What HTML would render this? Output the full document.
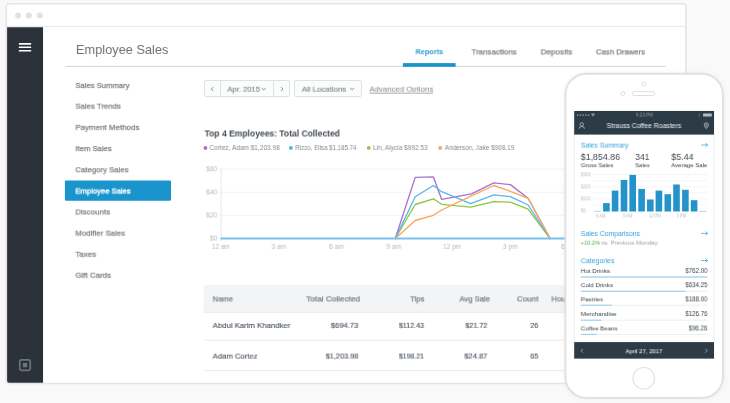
<!DOCTYPE html>
<html lang="en">
<head>
<meta charset="utf-8">
<title>Employee Sales</title>
<style>
*{box-sizing:border-box;}
html,body{margin:0;padding:0;}
body{width:730px;height:403px;overflow:hidden;position:relative;background:#f9f9f9;font-family:"Liberation Sans",sans-serif;}
.abs,.t,.layer,.layer div,.layer svg{position:absolute;}
.t{white-space:pre;transform-origin:0 0;}
.layer{left:0;top:0;width:730px;height:403px;}
.btn{top:80px;height:17px;border:1px solid #dfe2e4;background:#fbfcfc;border-radius:2px;}

</style>
</head>
<body>
<div class="layer" id="L1">
  <svg width="730" height="403" viewBox="0 0 730 403" style="left:0;top:0">
    <rect x="6.3" y="3.8" width="679.6" height="379.7" rx="3" ry="3" fill="#fff" stroke="#e5e5e5" stroke-width="1.6"/>
    <rect x="7.1" y="25.9" width="678" height="1" fill="#e6e6e6"/>
    <circle cx="18.1" cy="15.6" r="3" fill="#e1e1e1"/>
    <circle cx="28.9" cy="15.6" r="3" fill="#e1e1e1"/>
    <circle cx="39.7" cy="15.6" r="3" fill="#e1e1e1"/>
    <path d="M7.1 27.3 H43.05 V382.7 H9 Q7.1 382.7 7.1 380.8 Z" fill="#2b323a"/>
  </svg>
  <svg width="44" height="403" viewBox="0 0 44 403" style="left:0;top:0">
    <g fill="#fff">
      <rect x="18.8" y="43.05" width="12.4" height="1.6" rx="0.4"/>
      <rect x="18.8" y="46.5" width="12.4" height="1.6" rx="0.4"/>
      <rect x="18.8" y="50.0" width="12.4" height="1.6" rx="0.4"/>
    </g>
    <rect x="19.75" y="359.85" width="10.5" height="10.5" rx="1.6" fill="none" stroke="#6b737b" stroke-width="1.7"/>
    <rect x="22.9" y="363.0" width="4.2" height="4.2" rx="0.5" fill="#6b737b"/>
  </svg>
  <div class="btn" style="left:204px;width:86px"></div>
  <div class="abs" style="left:220px;top:80px;width:1px;height:17px;background:#dfe2e4"></div>
  <div class="abs" style="left:273px;top:80px;width:1px;height:17px;background:#dfe2e4"></div>
  <div class="btn" style="left:294px;width:68px"></div>
  <svg width="730" height="403" viewBox="0 0 730 403" style="left:0;top:0">
    <rect x="65.4" y="65.9" width="600.3" height="1" fill="#d0d6d6"/>
    <rect x="402.9" y="63.1" width="52.7" height="3.7" fill="#1a94cc"/>
    <rect x="64.9" y="180.4" width="106.1" height="20.4" rx="1.2" fill="#1a94cc"/>
    <rect x="203.6" y="284.9" width="482" height="27.4" fill="#f2f4f5"/>
    <rect x="203.6" y="311.8" width="482" height="1" fill="#e6e9eb"/>
    <rect x="203.6" y="339.7" width="482" height="1" fill="#e9ebed"/>
    <rect x="203.6" y="370.1" width="482" height="1" fill="#e9ebed"/>
    <!-- control chevrons -->
    <g fill="none" stroke="#8b9095" stroke-width="1" stroke-linecap="round" stroke-linejoin="round">
      <path d="M212.9 87.4 L211.3 89.1 L212.9 90.8"/>
      <path d="M281.3 87.4 L282.9 89.1 L281.3 90.8"/>
      <path d="M262.1 88.3 L263.8 89.9 L265.5 88.3"/>
      <path d="M350.5 88.3 L352.2 89.9 L353.9 88.3"/>
    </g>
    <!-- legend dots -->
    <circle cx="205.4" cy="147.9" r="1.9" fill="#a86bd4"/>
    <circle cx="290.9" cy="147.9" r="1.9" fill="#4bb3ea"/>
    <circle cx="368.8" cy="147.9" r="1.9" fill="#8dc63f"/>
    <circle cx="440.2" cy="147.9" r="1.9" fill="#f7a452"/>
    <!-- grid -->
    <g stroke="#eff0f1" stroke-width="0.8">
      <path d="M219 169.1H686 M219 192.3H686 M219 215.3H686"/>
    </g>
    <path d="M221.1 168V239.5" stroke="#e2e4e6" stroke-width="0.9"/>
    <g stroke="#e2e4e6" stroke-width="0.7">
      <path d="M221.1 238.4V241 M240.4 238.4V240.2 M259.8 238.4V240.2 M279.1 238.4V241 M298.4 238.4V240.2 M317.8 238.4V240.2 M337.1 238.4V241 M356.4 238.4V240.2 M375.8 238.4V240.2 M395.1 238.4V241 M414.4 238.4V240.2 M433.8 238.4V240.2 M453.1 238.4V241 M472.4 238.4V240.2 M491.8 238.4V240.2 M511.1 238.4V241 M530.4 238.4V240.2 M549.8 238.4V240.2"/>
    </g>
    <g fill="none" stroke-width="1.35" stroke-linejoin="round" stroke-linecap="round">
      <path stroke="#8fc545" d="M395.3 238.5L415.2 204.5L433.4 198.8L441.7 204.3L470.7 207.2L493.9 201.6L510.4 202.2L528.1 209.1L550.1 238.5"/>
      <path stroke="#a971d6" d="M395.3 238.5L415.2 177.4L433.4 176.9L441.7 199.4L471.4 193.9L493.9 182.8L510.4 184.6L528.1 198.3L550.1 238.5"/>
      <path stroke="#55b8ec" d="M395.3 238.5L415.2 196.7L433.4 185.5L441.7 191.7L470.7 203.7L493.9 194.8L510.4 196.7L528.1 205L550.1 238.5"/>
      <path stroke="#f7a75a" d="M395.3 238.5L415.2 220.5L433.4 215.3L441.7 210L471.4 195.9L493.9 185.5L510.4 191.3L528.1 198.3L550.1 238.5"/>
      <path stroke="#78c2ec" stroke-width="1.8" d="M221.1 238.5H686"/>
    </g>
  </svg>
<span class="t" style="left:75px;top:41px;font-size:12.8px;line-height:17px;color:#6a7076;transform:perspective(100000px) translate(0.90px,0.02px) rotateX(0.01deg) scale(1.0002,1);">Employee Sales</span>
<span class="t" style="left:75px;top:79px;font-size:8px;line-height:12px;color:#7b8085;transform:perspective(100000px) translate(0.40px,0.94px) rotateX(0.01deg) scale(0.9581,1);-webkit-text-stroke:0.25px;">Sales Summary</span>
<span class="t" style="left:75px;top:100px;font-size:8px;line-height:12px;color:#7b8085;transform:perspective(100000px) translate(0.40px,0.64px) rotateX(0.01deg) scale(0.9721,1);-webkit-text-stroke:0.25px;">Sales Trends</span>
<span class="t" style="left:75px;top:121px;font-size:8px;line-height:12px;color:#7b8085;transform:perspective(100000px) translate(0.40px,0.84px) rotateX(0.01deg) scale(0.9940,1);-webkit-text-stroke:0.25px;">Payment Methods</span>
<span class="t" style="left:75px;top:143px;font-size:8px;line-height:12px;color:#7b8085;transform:perspective(100000px) translate(0.40px,0.04px) rotateX(0.01deg) scale(0.9630,1);-webkit-text-stroke:0.25px;">Item Sales</span>
<span class="t" style="left:75px;top:164px;font-size:8px;line-height:12px;color:#7b8085;transform:perspective(100000px) translate(0.40px,0.24px) rotateX(0.01deg) scale(0.9707,1);-webkit-text-stroke:0.25px;">Category Sales</span>
<span class="t" style="left:75px;top:185px;font-size:8px;line-height:12px;color:#ffffff;transform:perspective(100000px) translate(0.40px,0.54px) rotateX(0.01deg) scale(0.9565,1);-webkit-text-stroke:0.35px;">Employee Sales</span>
<span class="t" style="left:75px;top:206px;font-size:8px;line-height:12px;color:#7b8085;transform:perspective(100000px) translate(0.40px,0.44px) rotateX(0.01deg) scale(0.9879,1);-webkit-text-stroke:0.25px;">Discounts</span>
<span class="t" style="left:75px;top:227px;font-size:8px;line-height:12px;color:#7b8085;transform:perspective(100000px) translate(0.40px,0.64px) rotateX(0.01deg) scale(0.9785,1);-webkit-text-stroke:0.25px;">Modifier Sales</span>
<span class="t" style="left:75px;top:248px;font-size:8px;line-height:12px;color:#7b8085;transform:perspective(100000px) translate(0.40px,0.74px) rotateX(0.01deg) scale(0.9901,1);-webkit-text-stroke:0.25px;">Taxes</span>
<span class="t" style="left:75px;top:269px;font-size:8px;line-height:12px;color:#7b8085;transform:perspective(100000px) translate(0.40px,0.74px) rotateX(0.01deg) scale(0.9912,1);-webkit-text-stroke:0.25px;">Gift Cards</span>
<span class="t" style="left:415px;top:46px;font-size:7.6px;line-height:11px;color:#2d9bd3;font-weight:700;transform:perspective(100000px) translate(0.50px,0.21px) rotateX(0.01deg) scale(0.9616,1);">Reports</span>
<span class="t" style="left:471px;top:46px;font-size:8.1px;line-height:12px;color:#7b8085;transform:perspective(100000px) translate(0.50px,0.37px) rotateX(0.01deg) scale(0.9794,1);-webkit-text-stroke:0.25px;">Transactions</span>
<span class="t" style="left:540px;top:46px;font-size:8.1px;line-height:12px;color:#7b8085;transform:perspective(100000px) translate(0.70px,0.37px) rotateX(0.01deg) scale(1.0000,1);-webkit-text-stroke:0.25px;">Deposits</span>
<span class="t" style="left:596px;top:46px;font-size:8.1px;line-height:12px;color:#7b8085;transform:perspective(100000px) translate(0.10px,0.37px) rotateX(0.01deg) scale(0.9536,1);-webkit-text-stroke:0.25px;">Cash Drawers</span>
<span class="t" style="left:227px;top:83px;font-size:8px;line-height:12px;color:#82878b;transform:perspective(100000px) translate(0.40px,0.74px) rotateX(0.01deg) scale(0.9518,1);-webkit-text-stroke:0.14px;">Apr. 2015</span>
<span class="t" style="left:301px;top:83px;font-size:8px;line-height:12px;color:#82878b;transform:perspective(100000px) translate(0.80px,0.74px) rotateX(0.01deg) scale(0.9811,1);-webkit-text-stroke:0.14px;">All Locations</span>
<span class="t" style="left:369px;top:83px;font-size:8px;line-height:12px;color:#808589;transform:perspective(100000px) translate(0.50px,0.64px) rotateX(0.01deg) scale(0.9744,1);text-decoration:underline;text-decoration-thickness:0.6px;text-underline-offset:1px;text-decoration-color:#a4a8ab;">Advanced Options</span>
<span class="t" style="left:204px;top:127px;font-size:8.8px;line-height:13px;color:#3f4850;font-weight:700;transform:perspective(100000px) translate(0.60px,0.50px) rotateX(0.01deg) scale(0.9700,1);">Top 4 Employees: Total Collected</span>
<span class="t" style="left:209px;top:143px;font-size:6.7px;line-height:10px;color:#85898e;transform:perspective(100000px) translate(0.60px,0.01px) rotateX(0.01deg) scale(0.9719,1);">Cortez, Adam $1,203.98</span>
<span class="t" style="left:295px;top:143px;font-size:6.7px;line-height:10px;color:#85898e;transform:perspective(100000px) translate(0.30px,0.01px) rotateX(0.01deg) scale(0.9212,1);">Rizzo, Elisa $1,185.74</span>
<span class="t" style="left:373px;top:143px;font-size:6.7px;line-height:10px;color:#85898e;transform:perspective(100000px) translate(0.00px,0.01px) rotateX(0.01deg) scale(0.9723,1);">Lin, Alycia $992.53</span>
<span class="t" style="left:444px;top:143px;font-size:6.7px;line-height:10px;color:#85898e;transform:perspective(100000px) translate(0.80px,0.01px) rotateX(0.01deg) scale(0.9598,1);">Anderson, Jake $908.19</span>
<span class="t" style="left:206px;top:164px;font-size:6.6px;line-height:10px;color:#b3b7ba;transform:perspective(100000px) translate(0.28px,0.28px) rotateX(0.01deg) scale(1.0000,1);">$60</span>
<span class="t" style="left:206px;top:187px;font-size:6.6px;line-height:10px;color:#b3b7ba;transform:perspective(100000px) translate(0.28px,0.48px) rotateX(0.01deg) scale(1.0000,1);">$40</span>
<span class="t" style="left:206px;top:210px;font-size:6.6px;line-height:10px;color:#b3b7ba;transform:perspective(100000px) translate(0.28px,0.48px) rotateX(0.01deg) scale(1.0000,1);">$20</span>
<span class="t" style="left:209px;top:233px;font-size:6.6px;line-height:10px;color:#b3b7ba;transform:perspective(100000px) translate(0.96px,0.58px) rotateX(0.01deg) scale(1.0000,1);">$0</span>
<span class="t" style="left:212px;top:241px;font-size:6.6px;line-height:10px;color:#b3b7ba;transform:perspective(100000px) translate(0.00px,0.88px) rotateX(0.01deg) scale(0.9603,1);">12 am</span>
<span class="t" style="left:271px;top:241px;font-size:6.6px;line-height:10px;color:#b3b7ba;transform:perspective(100000px) translate(0.50px,0.88px) rotateX(0.01deg) scale(1.0087,1);">3 am</span>
<span class="t" style="left:329px;top:241px;font-size:6.6px;line-height:10px;color:#b3b7ba;transform:perspective(100000px) translate(0.10px,0.88px) rotateX(0.01deg) scale(1.0087,1);">6 am</span>
<span class="t" style="left:386px;top:241px;font-size:6.6px;line-height:10px;color:#b3b7ba;transform:perspective(100000px) translate(0.40px,0.88px) rotateX(0.01deg) scale(1.0087,1);">9 am</span>
<span class="t" style="left:443px;top:241px;font-size:6.6px;line-height:10px;color:#b3b7ba;transform:perspective(100000px) translate(0.30px,0.88px) rotateX(0.01deg) scale(0.9603,1);">12 pm</span>
<span class="t" style="left:502px;top:241px;font-size:6.6px;line-height:10px;color:#b3b7ba;transform:perspective(100000px) translate(0.90px,0.88px) rotateX(0.01deg) scale(1.0087,1);">3 pm</span>
<span class="t" style="left:561px;top:241px;font-size:6.6px;line-height:10px;color:#b3b7ba;transform:perspective(100000px) translate(0.10px,0.88px) rotateX(0.01deg) scale(1.0087,1);">6 pm</span>
<span class="t" style="left:212px;top:293px;font-size:7.8px;line-height:11px;color:#7b8085;transform:perspective(100000px) translate(0.70px,0.37px) rotateX(0.01deg) scale(0.9754,1);-webkit-text-stroke:0.25px;">Name</span>
<span class="t" style="left:306px;top:293px;font-size:7.8px;line-height:11px;color:#7b8085;transform:perspective(100000px) translate(0.10px,0.37px) rotateX(0.01deg) scale(1.0559,1);-webkit-text-stroke:0.25px;">Total Collected</span>
<span class="t" style="left:410px;top:293px;font-size:7.8px;line-height:11px;color:#7b8085;transform:perspective(100000px) translate(0.20px,0.37px) rotateX(0.01deg) scale(0.9894,1);-webkit-text-stroke:0.25px;">Tips</span>
<span class="t" style="left:459px;top:293px;font-size:7.8px;line-height:11px;color:#7b8085;transform:perspective(100000px) translate(0.50px,0.37px) rotateX(0.01deg) scale(0.9814,1);-webkit-text-stroke:0.25px;">Avg Sale</span>
<span class="t" style="left:517px;top:293px;font-size:7.8px;line-height:11px;color:#7b8085;transform:perspective(100000px) translate(0.00px,0.37px) rotateX(0.01deg) scale(1.0282,1);-webkit-text-stroke:0.25px;">Count</span>
<span class="t" style="left:551px;top:293px;font-size:7.8px;line-height:11px;color:#7b8085;transform:perspective(100000px) translate(0.40px,0.37px) rotateX(0.01deg) scale(1.0000,1);-webkit-text-stroke:0.25px;">Hours</span>
<span class="t" style="left:212px;top:319px;font-size:8.1px;line-height:12px;color:#4b5661;transform:perspective(100000px) translate(0.70px,0.97px) rotateX(0.01deg) scale(0.9594,1);-webkit-text-stroke:0.14px;">Abdul Karim Khandker</span>
<span class="t" style="left:330px;top:319px;font-size:7.8px;line-height:11px;color:#4b5661;transform:perspective(100000px) translate(0.80px,0.87px) rotateX(0.01deg) scale(0.9792,1);-webkit-text-stroke:0.14px;">$694.73</span>
<span class="t" style="left:399px;top:319px;font-size:7.8px;line-height:11px;color:#4b5661;transform:perspective(100000px) translate(0.00px,0.87px) rotateX(0.01deg) scale(0.9055,1);-webkit-text-stroke:0.14px;">$112.43</span>
<span class="t" style="left:465px;top:319px;font-size:7.8px;line-height:11px;color:#4b5661;transform:perspective(100000px) translate(0.40px,0.87px) rotateX(0.01deg) scale(0.9179,1);-webkit-text-stroke:0.14px;">$21.72</span>
<span class="t" style="left:530px;top:319px;font-size:7.8px;line-height:11px;color:#4b5661;transform:perspective(100000px) translate(0.30px,0.87px) rotateX(0.01deg) scale(0.9324,1);-webkit-text-stroke:0.14px;">26</span>
<span class="t" style="left:212px;top:350px;font-size:8.1px;line-height:12px;color:#4b5661;transform:perspective(100000px) translate(0.70px,0.67px) rotateX(0.01deg) scale(0.9485,1);-webkit-text-stroke:0.14px;">Adam Cortez</span>
<span class="t" style="left:325px;top:350px;font-size:7.8px;line-height:11px;color:#4b5661;transform:perspective(100000px) translate(0.80px,0.57px) rotateX(0.01deg) scale(0.9398,1);-webkit-text-stroke:0.14px;">$1,203.98</span>
<span class="t" style="left:399px;top:350px;font-size:7.8px;line-height:11px;color:#4b5661;transform:perspective(100000px) translate(0.00px,0.57px) rotateX(0.01deg) scale(0.8869,1);-webkit-text-stroke:0.14px;">$198.21</span>
<span class="t" style="left:464px;top:350px;font-size:7.8px;line-height:11px;color:#4b5661;transform:perspective(100000px) translate(0.40px,0.57px) rotateX(0.01deg) scale(0.9598,1);-webkit-text-stroke:0.14px;">$24.87</span>
<span class="t" style="left:530px;top:350px;font-size:7.8px;line-height:11px;color:#4b5661;transform:perspective(100000px) translate(0.30px,0.57px) rotateX(0.01deg) scale(0.9324,1);-webkit-text-stroke:0.14px;">65</span>
</div>
<div class="layer" id="L2">
  <div class="abs" style="left:565px;top:74px;width:158px;height:324px;border-radius:21px;box-shadow:0 0 5px 1px rgba(0,0,0,0.05)"></div>
  <svg width="730" height="403" viewBox="0 0 730 403" style="left:0;top:0">
    <rect x="565.4" y="73.8" width="157.5" height="324.1" rx="21" ry="21" fill="#fff" stroke="#e0e0e0" stroke-width="1.9"/>
    <g fill="#fff" stroke="#dcdcdc" stroke-width="0.9">
      <circle cx="643.7" cy="83.8" r="2"/>
      <circle cx="622.9" cy="93.5" r="2"/>
      <rect x="632.2" y="91.6" width="22.6" height="3.9" rx="1.95"/>
      <circle cx="643.75" cy="378.25" r="10.8" stroke="#e2e2e2" stroke-width="1.1"/>
    </g>
    <rect x="574.2" y="111" width="139.8" height="247.6" fill="#fff" stroke="#e6e8ea" stroke-width="0.8"/>
    <rect x="574.2" y="111" width="139.8" height="23.6" fill="#2c3c47"/>
    <rect x="574.2" y="342.1" width="139.8" height="16.5" fill="#2c3c47"/>
  </svg>
  <svg width="730" height="403" viewBox="0 0 730 403" style="left:0;top:0">
    <!-- status bar -->
    <g fill="#84919a">
      <circle cx="577.7" cy="115.1" r="0.9"/><circle cx="580.4" cy="115.1" r="0.9"/><circle cx="583.1" cy="115.1" r="0.9"/><circle cx="585.8" cy="115.1" r="0.9"/><circle cx="588.5" cy="115.1" r="0.9"/>
      <path d="M590.9 114.1 Q593 112.5 595.1 114.1 L593 116.7 Z"/>
    </g>
    <rect x="703" y="113.6" width="8.8" height="3" rx="0.7" fill="#b3bcc3"/>
    <path d="M698.7 113.9 L699.9 115.1 L698.7 116.3 M699.2 113.2 V117" stroke="#66747e" stroke-width="0.5" fill="none"/>
    <!-- person icon -->
    <g fill="none" stroke="#b4bcc2" stroke-width="0.8">
      <circle cx="581.8" cy="124.4" r="1.7"/>
      <path d="M579.1 128.7 Q579.1 126.5 581.8 126.5 Q584.5 126.5 584.5 128.7"/>
    </g>
    <!-- pin icon -->
    <g fill="#55646f" stroke="#aab3ba" stroke-width="0.8">
      <path d="M706.3 128.7 Q704.2 126.4 704.2 124.9 A2.1 2.1 0 0 1 708.4 124.9 Q708.4 126.4 706.3 128.7 Z"/>
      <circle cx="706.3" cy="124.9" r="0.5" fill="#aab3ba" stroke="none"/>
    </g>
    <!-- arrows -->
    <g fill="none" stroke="#35a0db" stroke-width="0.75" stroke-linecap="round" stroke-linejoin="round">
      <path d="M701.6 145H707.5 M705.8 143.3L707.5 145L705.8 146.7"/>
      <path d="M701.6 233.4H707.5 M705.8 231.7L707.5 233.4L705.8 235.1"/>
      <path d="M701.6 260.6H707.5 M705.8 258.9L707.5 260.6L705.8 262.3"/>
    </g>
    <!-- bar chart grid -->
    <g stroke="#eef1f4" stroke-width="0.7">
      <path d="M592 174.6H707.4 M592 180.7H707.4 M592 186.7H707.4 M592 192.8H707.4 M592 198.8H707.4 M592 204.9H707.4"/>
    </g>
    <g fill="#2493ca">
      <rect x="594.2" y="210.9" width="6.6" height="0.7" fill="#8cc6ea"/>
      <rect x="603.1" y="203.1" width="6.6" height="8.4"/>
      <rect x="611.8" y="190.6" width="6.6" height="20.9"/>
      <rect x="620.7" y="180" width="6.6" height="31.5"/>
      <rect x="629.4" y="174.9" width="6.6" height="36.6"/>
      <rect x="638.3" y="188.9" width="6.6" height="22.6"/>
      <rect x="647" y="199.5" width="6.6" height="12"/>
      <rect x="655.6" y="190.6" width="6.6" height="20.9"/>
      <rect x="664.5" y="194.2" width="6.6" height="17.3"/>
      <rect x="673.2" y="184.5" width="6.6" height="27"/>
      <rect x="682.1" y="189.8" width="6.6" height="21.7"/>
      <rect x="690.8" y="200.2" width="6.6" height="11.3"/>
      <rect x="699.6" y="210.9" width="6.6" height="0.7" fill="#8cc6ea"/>
    </g>
    <!-- footer chevrons -->
    <g fill="none" stroke="#aeb6bc" stroke-width="0.8" stroke-linecap="round" stroke-linejoin="round">
      <path d="M582.6 349.2 L581 350.8 L582.6 352.4"/>
      <path d="M705.6 349.2 L707.2 350.8 L705.6 352.4"/>
    </g>
  </svg>
  <svg width="730" height="403" viewBox="0 0 730 403" style="left:0;top:0">
    <rect x="580.8" y="276.50" width="126.6" height="1" fill="#eceff1"/>
    <rect x="580.8" y="276.45" width="126.6" height="1.1" fill="#9bcfef"/>
    <rect x="580.8" y="290.80" width="126.6" height="1" fill="#eceff1"/>
    <rect x="580.8" y="290.75" width="104.9" height="1.1" fill="#9bcfef"/>
    <rect x="580.8" y="304.70" width="126.6" height="1" fill="#eceff1"/>
    <rect x="580.8" y="304.65" width="31.0" height="1.1" fill="#9bcfef"/>
    <rect x="580.8" y="319.70" width="126.6" height="1" fill="#eceff1"/>
    <rect x="580.8" y="319.65" width="20.7" height="1.1" fill="#9bcfef"/>
    <rect x="580.8" y="333.90" width="126.6" height="1" fill="#eceff1"/>
    <rect x="580.8" y="333.85" width="15.8" height="1.1" fill="#9bcfef"/>
  </svg>
<span class="t" style="left:636px;top:111px;font-size:4.6px;line-height:8px;color:#8d9aa3;transform:perspective(100000px) translate(0.10px,0.62px) rotateX(0.01deg) scale(0.9819,1);">6:23 PM</span>
<span class="t" style="left:606px;top:121px;font-size:6.9px;line-height:10px;color:#eef1f3;transform:perspective(100000px) translate(0.65px,0.08px) rotateX(0.01deg) scale(0.9966,1);">Strauss Coffee Roasters</span>
<span class="t" style="left:580px;top:140px;font-size:6.8px;line-height:10px;color:#35a0db;transform:perspective(100000px) translate(0.90px,0.64px) rotateX(0.01deg) scale(0.9920,1);">Sales Summary</span>
<span class="t" style="left:580px;top:149px;font-size:9.8px;line-height:14px;color:#3f4850;transform:perspective(100000px) translate(0.80px,0.93px) rotateX(0.01deg) scale(0.8992,1);">$1,854.86</span>
<span class="t" style="left:635px;top:149px;font-size:9.8px;line-height:14px;color:#3f4850;transform:perspective(100000px) translate(0.20px,0.93px) rotateX(0.01deg) scale(0.8680,1);">341</span>
<span class="t" style="left:671px;top:149px;font-size:9.8px;line-height:14px;color:#3f4850;transform:perspective(100000px) translate(0.30px,0.93px) rotateX(0.01deg) scale(0.9131,1);">$5.44</span>
<span class="t" style="left:580px;top:160px;font-size:6.1px;line-height:9px;color:#3a424a;transform:perspective(100000px) translate(0.80px,0.21px) rotateX(0.01deg) scale(0.9788,1);">Gross Sales</span>
<span class="t" style="left:635px;top:160px;font-size:6.1px;line-height:9px;color:#3a424a;transform:perspective(100000px) translate(0.20px,0.21px) rotateX(0.01deg) scale(0.9443,1);">Sales</span>
<span class="t" style="left:671px;top:160px;font-size:6.1px;line-height:9px;color:#3a424a;transform:perspective(100000px) translate(0.30px,0.21px) rotateX(0.01deg) scale(0.9895,1);">Average Sale</span>
<span class="t" style="left:580px;top:171px;font-size:4.5px;line-height:7px;color:#b9bec2;transform:perspective(100000px) translate(0.80px,0.29px) rotateX(0.01deg) scale(0.9785,1);">$300</span>
<span class="t" style="left:580px;top:183px;font-size:4.5px;line-height:7px;color:#b9bec2;transform:perspective(100000px) translate(0.80px,0.39px) rotateX(0.01deg) scale(0.9785,1);">$200</span>
<span class="t" style="left:580px;top:195px;font-size:4.5px;line-height:7px;color:#b9bec2;transform:perspective(100000px) translate(0.80px,0.39px) rotateX(0.01deg) scale(0.9785,1);">$100</span>
<span class="t" style="left:580px;top:207px;font-size:4.5px;line-height:7px;color:#b9bec2;transform:perspective(100000px) translate(0.80px,0.39px) rotateX(0.01deg) scale(0.9969,1);">$0</span>
<span class="t" style="left:595px;top:212px;font-size:4.5px;line-height:7px;color:#b9bec2;transform:perspective(100000px) translate(0.90px,0.59px) rotateX(0.01deg) scale(0.9352,1);">6 AM</span>
<span class="t" style="left:622px;top:212px;font-size:4.5px;line-height:7px;color:#b9bec2;transform:perspective(100000px) translate(0.90px,0.59px) rotateX(0.01deg) scale(0.9352,1);">9 AM</span>
<span class="t" style="left:648px;top:212px;font-size:4.5px;line-height:7px;color:#b9bec2;transform:perspective(100000px) translate(0.90px,0.59px) rotateX(0.01deg) scale(0.9220,1);">12 PM</span>
<span class="t" style="left:676px;top:212px;font-size:4.5px;line-height:7px;color:#b9bec2;transform:perspective(100000px) translate(0.60px,0.59px) rotateX(0.01deg) scale(0.9129,1);">3 PM</span>
<span class="t" style="left:580px;top:229px;font-size:6.8px;line-height:10px;color:#35a0db;transform:perspective(100000px) translate(0.80px,0.04px) rotateX(0.01deg) scale(1.0045,1);">Sales Comparisons</span>
<span class="t" style="left:580px;top:237px;font-size:6.1px;line-height:9px;color:#47ab4c;transform:perspective(100000px) translate(0.80px,0.71px) rotateX(0.01deg) scale(0.9115,1);">+10.2%</span>
<span class="t" style="left:601px;top:237px;font-size:6.1px;line-height:9px;color:#999ea2;transform:perspective(100000px) translate(0.20px,0.71px) rotateX(0.01deg) scale(1.0007,1);">vs. Previous Monday</span>
<span class="t" style="left:580px;top:256px;font-size:6.9px;line-height:10px;color:#35a0db;transform:perspective(100000px) translate(0.80px,0.18px) rotateX(0.01deg) scale(1.0112,1);">Categories</span>
<span class="t" style="left:580px;top:265px;font-size:6.2px;line-height:9px;color:#3a424a;transform:perspective(100000px) translate(0.80px,0.95px) rotateX(0.01deg) scale(1.0142,1);">Hot Drinks</span>
<span class="t" style="left:685px;top:265px;font-size:6.3px;line-height:10px;color:#3a424a;transform:perspective(100000px) translate(0.50px,0.98px) rotateX(0.01deg) scale(0.9620,1);">$762.00</span>
<span class="t" style="left:580px;top:280px;font-size:6.2px;line-height:9px;color:#3a424a;transform:perspective(100000px) translate(0.80px,0.15px) rotateX(0.01deg) scale(1.0067,1);">Cold Drinks</span>
<span class="t" style="left:685px;top:280px;font-size:6.3px;line-height:10px;color:#3a424a;transform:perspective(100000px) translate(0.50px,0.18px) rotateX(0.01deg) scale(0.9620,1);">$634.25</span>
<span class="t" style="left:580px;top:294px;font-size:6.2px;line-height:9px;color:#3a424a;transform:perspective(100000px) translate(0.80px,0.35px) rotateX(0.01deg) scale(0.9973,1);">Pastries</span>
<span class="t" style="left:685px;top:294px;font-size:6.3px;line-height:10px;color:#3a424a;transform:perspective(100000px) translate(0.50px,0.38px) rotateX(0.01deg) scale(0.9620,1);">$188.00</span>
<span class="t" style="left:580px;top:308px;font-size:6.2px;line-height:9px;color:#3a424a;transform:perspective(100000px) translate(0.80px,0.95px) rotateX(0.01deg) scale(1.0102,1);">Merchandise</span>
<span class="t" style="left:685px;top:308px;font-size:6.3px;line-height:10px;color:#3a424a;transform:perspective(100000px) translate(0.50px,0.98px) rotateX(0.01deg) scale(0.9620,1);">$126.76</span>
<span class="t" style="left:580px;top:323px;font-size:6.2px;line-height:9px;color:#3a424a;transform:perspective(100000px) translate(0.80px,0.45px) rotateX(0.01deg) scale(0.9842,1);">Coffee Beans</span>
<span class="t" style="left:688px;top:323px;font-size:6.3px;line-height:10px;color:#3a424a;transform:perspective(100000px) translate(0.80px,0.48px) rotateX(0.01deg) scale(0.9655,1);">$96.26</span>
<span class="t" style="left:625px;top:346px;font-size:6.2px;line-height:9px;color:#ffffff;transform:perspective(100000px) translate(0.60px,0.25px) rotateX(0.01deg) scale(0.9637,1);">April 27, 2017</span>
</div>

</body>
</html>
